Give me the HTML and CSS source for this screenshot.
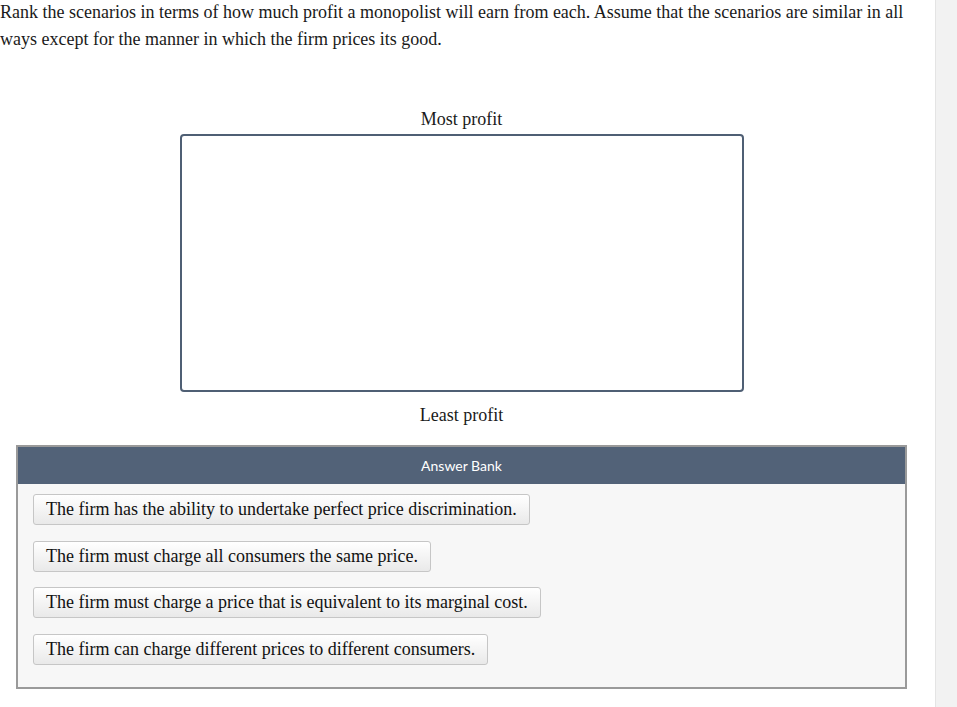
FILE: index.html
```html
<!DOCTYPE html>
<html lang="en">
<head>
  <meta charset="UTF-8">
  <title>Ranking Question</title>
  <link rel="stylesheet" href="styles.css">
</head>
<body>

  <div class="page">
    <main class="question">
      <p class="prompt">Rank the scenarios in terms of how much profit a monopolist will earn from each. Assume that the scenarios are similar in all ways except for the manner in which the firm prices its good.</p>

      <div class="ranking">
        <div class="rank-label">Most profit</div>
        <div class="drop-zone"></div>
        <div class="rank-label">Least profit</div>
      </div>

      <section class="answer-bank">
        <div class="bank-header">Answer Bank</div>
        <div class="bank-items">
          <div class="chip">The firm has the ability to undertake perfect price discrimination.</div>
          <div class="chip">The firm must charge all consumers the same price.</div>
          <div class="chip">The firm must charge a price that is equivalent to its marginal cost.</div>
          <div class="chip">The firm can charge different prices to different consumers.</div>
        </div>
      </section>
    </main>

    <aside class="side-rail"></aside>
  </div>

</body>
</html>
```

FILE: styles.css
```css
body {
  margin: 0;
  padding: 0;
  background: #fff;
  color: #1a1a1a;
  font-family: 'Liberation Serif', 'Times New Roman', serif;
  font-size: 18px;
}

.page {
  display: flex;
  height: 707px;
}

.question {
  width: 923px;
  flex: none;
}

.side-rail {
  margin-left: 12px;
  flex: 1;
  background: #f2f2f2;
  border-left: 1px solid #e4e4e4;
}

.prompt {
  margin: -1px 0 0 0;
  line-height: 27px;
}

.ranking {
  display: flex;
  flex-direction: column;
  align-items: center;
  margin-top: 56px;
}

.rank-label {
  line-height: 20px;
}

.drop-zone {
  width: 560px;
  height: 254px;
  margin: 5px 0 13px;
  border: 2px solid #4f5f74;
  border-radius: 4px;
}

.answer-bank {
  margin: 20px 16px 0;
  border: 2px solid #9a9a9a;
  background: #f7f7f7;
}

.bank-header {
  background: #526278;
  color: #fff;
  font-family: Lato, 'Open Sans', sans-serif;
  font-size: 14px;
  text-align: center;
  height: 37px;
  line-height: 37px;
}

.bank-items {
  display: flex;
  flex-direction: column;
  align-items: flex-start;
  gap: 15.7px;
  padding: 10px 15px 22px;
}

.chip {
  padding: 6px 12px;
  line-height: 17px;
  border: 1px solid #c6c6c6;
  border-radius: 3px;
  background: linear-gradient(#ffffff, #e9e9e9);
  color: #111;
  cursor: grab;
}
```
